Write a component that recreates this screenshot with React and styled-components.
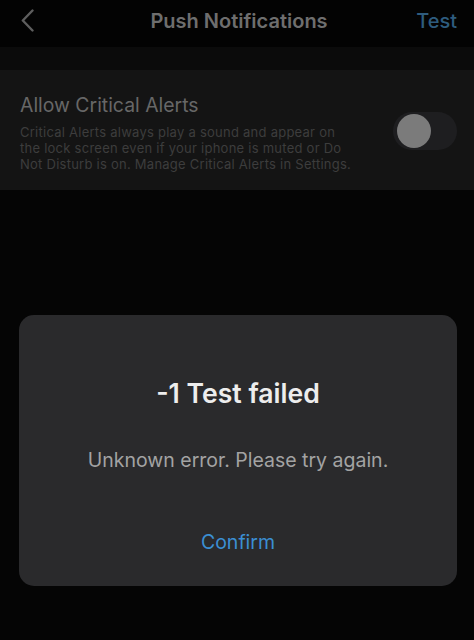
import React from 'react';
import styled, { createGlobalStyle } from 'styled-components';

const GlobalStyle = createGlobalStyle`
  html, body {
    margin: 0;
    padding: 0;
    background: #050505;
  }
  body {
    font-family: Inter, "Noto Sans", sans-serif;
    -webkit-font-smoothing: antialiased;
  }
`;

const Screen = styled.div`
  width: 474px;
  height: 640px;
  display: flex;
  flex-direction: column;
  background: #050505;
  overflow: hidden;
`;

const Header = styled.header`
  height: 47px;
  flex-shrink: 0;
  display: grid;
  grid-template-columns: 80px 1fr 80px;
  align-items: center;
  padding: 0 17px 6px 21px;
  background: #030303;
  box-sizing: border-box;
`;

const BackButton = styled.button`
  justify-self: start;
  padding: 0;
  border: 0;
  background: none;
  display: flex;
  align-items: center;
  color: #5e5e5e;
`;

const Title = styled.h1`
  margin: 0;
  text-align: center;
  font-size: 20px;
  font-weight: 600;
  color: #6e6e6e;
`;

const HeaderAction = styled.button`
  justify-self: end;
  padding: 0;
  border: 0;
  background: none;
  font-family: inherit;
  font-size: 20px;
  font-weight: 500;
  color: #2e5c7e;
`;

const Band = styled.div`
  height: 23px;
  flex-shrink: 0;
  background: #0b0b0b;
`;

const SettingRow = styled.section`
  height: 120px;
  flex-shrink: 0;
  box-sizing: border-box;
  display: flex;
  align-items: center;
  justify-content: space-between;
  padding: 0 17px 0 20px;
  background: #141414;
`;

const SettingText = styled.div`
  display: flex;
  flex-direction: column;
  gap: 6px;
  margin-top: 4px;
`;

const SettingLabel = styled.div`
  font-size: 19.4px;
  line-height: 26px;
  color: #676767;
`;

const SettingHint = styled.p`
  margin: 0;
  font-size: 13px;
  line-height: 16px;
  color: #3d3d3d;
  letter-spacing: 0.25px;
`;

const Toggle = styled.div`
  width: 64px;
  height: 38px;
  border-radius: 19px;
  background: #1e1e20;
  padding: 2px 4px;
  box-sizing: border-box;
  display: flex;
  align-items: center;
  justify-content: ${p => (p.$on ? 'flex-end' : 'flex-start')};
  margin-top: 2px;
`;

const Knob = styled.span`
  width: 34px;
  height: 34px;
  border-radius: 50%;
  background: #7b7b7b;
`;

const Backdrop = styled.div`
  flex: 1;
  padding: 125px 17px 0 19px;
`;

const Dialog = styled.div`
  height: 271px;
  box-sizing: border-box;
  border-radius: 15px;
  background: #2a2a2c;
  display: flex;
  flex-direction: column;
  align-items: center;
  padding: 61px 24px 31px;
`;

const DialogTitle = styled.h2`
  margin: 0;
  font-size: 26.6px;
  line-height: 34px;
  font-weight: 600;
  color: #ededed;
`;

const DialogMessage = styled.p`
  margin: 37px 0 0;
  font-size: 19.5px;
  line-height: 26px;
  color: #a3a3a3;
`;

const DialogButton = styled.button`
  margin-top: 56px;
  padding: 0;
  border: 0;
  background: none;
  font-family: inherit;
  font-size: 19.5px;
  line-height: 26px;
  color: #3b8fd3;
`;

const ChevronLeft = () => (
  <svg width="13" height="23" viewBox="0 0 13 23" fill="none">
    <polyline
      points="11.5,1.5 1.8,11.5 11.5,21.5"
      stroke="currentColor"
      strokeWidth="2.4"
      strokeLinecap="round"
      strokeLinejoin="round"
    />
  </svg>
);

export default function App() {
  return (
    <>
      <GlobalStyle />
      <Screen>
        <Header>
          <BackButton aria-label="Back">
            <ChevronLeft />
          </BackButton>
          <Title>Push Notifications</Title>
          <HeaderAction>Test</HeaderAction>
        </Header>
        <Band />
        <SettingRow>
          <SettingText>
            <SettingLabel>Allow Critical Alerts</SettingLabel>
            <SettingHint>
              Critical Alerts always play a sound and appear on
              <br />
              the lock screen even if your iphone is muted or Do
              <br />
              Not Disturb is on. Manage Critical Alerts in Settings.
            </SettingHint>
          </SettingText>
          <Toggle $on={false}>
            <Knob />
          </Toggle>
        </SettingRow>
        <Backdrop>
          <Dialog>
            <DialogTitle>-1 Test failed</DialogTitle>
            <DialogMessage>Unknown error. Please try again.</DialogMessage>
            <DialogButton>Confirm</DialogButton>
          </Dialog>
        </Backdrop>
      </Screen>
    </>
  );
}
